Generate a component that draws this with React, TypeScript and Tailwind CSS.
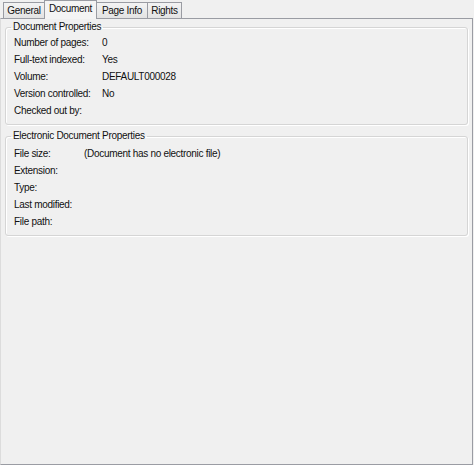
import React from "react";

const font = { fontFamily: '"Liberation Sans", Arial, sans-serif' };

function Row({ label, value, valueX }: { label: string; value?: string; valueX: string }) {
  return (
    <div className="flex h-[17px] items-center whitespace-nowrap">
      <div className={valueX + " shrink-0 pl-[8px]"}>{label}</div>
      <div>{value ?? ""}</div>
    </div>
  );
}

function Group({ title, children }: { title: string; children: React.ReactNode }) {
  return (
    <fieldset className="mx-[4px] rounded-[3px] border border-[#d5d5d5] shadow-[inset_1px_1px_0_#ffffff,1px_1px_0_#ffffff]">
      <legend className="ml-[5px] px-[2px] leading-[12px]">{title}</legend>
      {children}
    </fieldset>
  );
}

export default function App() {
  return (
    <div className="w-[474px] h-[465px] bg-[#f0f0f0] text-[10px] tracking-[-0.3px] text-[#111111]" style={font}>
      <div className="flex h-[18px] items-end pl-[3px]">
        <div className="h-[16px] w-[42px] -mr-px flex items-center justify-center border border-b-0 border-[#9a9ca3] bg-gradient-to-b from-[#f3f3f3] to-[#e3e3e3] leading-none">
          General
        </div>
        <div className="relative z-10 -mb-px h-[19px] w-[53px] flex items-start justify-center pt-[3px] border border-b-0 border-[#9a9ca3] bg-[#f4f4f4] leading-none">
          Document
        </div>
        <div className="h-[16px] w-[52px] -ml-px flex items-center justify-center border border-b-0 border-[#9a9ca3] bg-gradient-to-b from-[#f3f3f3] to-[#e3e3e3] leading-none">
          Page Info
        </div>
        <div className="h-[16px] w-[35px] -ml-px flex items-center justify-center border border-b-0 border-[#9a9ca3] bg-gradient-to-b from-[#f3f3f3] to-[#e3e3e3] leading-none">
          Rights
        </div>
      </div>
      <div className="h-[447px] w-[473px] border border-[#9a9ca3] border-l-[#dcdcdc] bg-[#f0f0f0] pt-[2px]">
        <Group title="Document Properties">
          <div className="pt-[1px] pb-[5px]">
            <Row label="Number of pages:" value="0" valueX="w-[96px]" />
            <Row label="Full-text indexed:" value="Yes" valueX="w-[96px]" />
            <Row label="Volume:" value="DEFAULT000028" valueX="w-[96px]" />
            <Row label="Version controlled:" value="No" valueX="w-[96px]" />
            <Row label="Checked out by:" valueX="w-[96px]" />
          </div>
        </Group>
        <div className="h-[5px]" />
        <Group title="Electronic Document Properties">
          <div className="pt-[3px] pb-[5px]">
            <Row label="File size:" value="(Document has no electronic file)" valueX="w-[78px]" />
            <Row label="Extension:" valueX="w-[78px]" />
            <Row label="Type:" valueX="w-[78px]" />
            <Row label="Last modified:" valueX="w-[78px]" />
            <Row label="File path:" valueX="w-[78px]" />
          </div>
        </Group>
      </div>
    </div>
  );
}
